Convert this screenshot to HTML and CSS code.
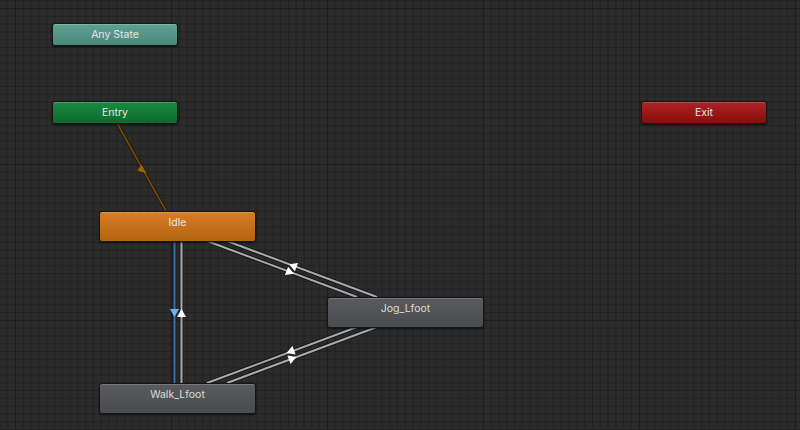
FILE: index.html
```html
<!DOCTYPE html>
<html>
<head>
<meta charset="utf-8">
<link rel="stylesheet" href="styles.css">
</head>
<body>
<div class="graph">
  <svg class="edges" width="800" height="430" viewBox="0 0 800 430">
    <!-- Entry -> Idle -->
    <line x1="117" y1="123" x2="166" y2="211" stroke="#1a1306" stroke-width="3.5"/>
    <line x1="117" y1="123" x2="166" y2="211" stroke="#6a4810" stroke-width="1.8"/>
    <polygon points="137.5,170.5 141.5,164.5 146.5,173.5" fill="#9a660c"/>

    <!-- Idle <-> Walk -->
    <line x1="174.5" y1="241" x2="174.5" y2="383" stroke="#181818" stroke-width="4"/>
    <line x1="174.5" y1="241" x2="174.5" y2="383" stroke="#3e6fa6" stroke-width="2"/>
    <line x1="181.5" y1="241" x2="181.5" y2="383" stroke="#181818" stroke-width="4"/>
    <line x1="181.5" y1="241" x2="181.5" y2="383" stroke="#ababab" stroke-width="2"/>
    <polygon points="170,309 179,309 174.5,317" fill="#6db1f2"/>
    <polygon points="177,317 186,317 181.5,309" fill="#ffffff"/>

    <!-- Idle <-> Jog -->
    <line x1="207" y1="241" x2="357" y2="297" stroke="#161616" stroke-width="4"/>
    <line x1="207" y1="241" x2="357" y2="297" stroke="#ababab" stroke-width="2"/>
    <line x1="227" y1="241" x2="377" y2="297" stroke="#161616" stroke-width="4"/>
    <line x1="227" y1="241" x2="377" y2="297" stroke="#ababab" stroke-width="2"/>
    <!-- Walk <-> Jog -->
    <line x1="207" y1="383" x2="357" y2="327" stroke="#161616" stroke-width="4"/>
    <line x1="207" y1="383" x2="357" y2="327" stroke="#ababab" stroke-width="2"/>
    <line x1="227" y1="383" x2="377" y2="327" stroke="#161616" stroke-width="4"/>
    <line x1="227" y1="383" x2="377" y2="327" stroke="#ababab" stroke-width="2"/>

    <g transform="translate(291.5 269) rotate(-69.5)">
      <polygon points="-8,-4 1,-4 -3.5,4" fill="#ffffff"/>
      <polygon points="-1,4 8,4 3.5,-4" fill="#ffffff"/>
    </g>
    <g transform="translate(291.5 355) rotate(-110.5)">
      <polygon points="-8,-4 1,-4 -3.5,4" fill="#ffffff"/>
      <polygon points="-1,4 8,4 3.5,-4" fill="#ffffff"/>
    </g>
  </svg>

  <div class="node any" style="left:52px;top:23px;">Any State</div>
  <div class="node entry" style="left:52px;top:101px;">Entry</div>
  <div class="node exit" style="left:641px;top:101px;">Exit</div>
  <div class="node state idle" style="left:99px;top:211px;">Idle</div>
  <div class="node state gray" style="left:327px;top:297px;">Jog_Lfoot</div>
  <div class="node state gray" style="left:99px;top:383px;">Walk_Lfoot</div>
</div>
</body>
</html>
```
FILE: styles.css
```css
html, body {
  margin: 0;
  padding: 0;
  background: #2a2a2a;
}
.graph {
  position: relative;
  width: 800px;
  height: 430px;
  overflow: hidden;
  background-color: #2b2b2b;
  background-image:
    linear-gradient(to right, #1d1d1d 1px, transparent 1px),
    linear-gradient(to bottom, #1d1d1d 1px, transparent 1px),
    linear-gradient(to right, #222222 1px, transparent 1px),
    linear-gradient(to bottom, #222222 1px, transparent 1px);
  background-size: 156px 156px, 156px 156px, 7.8px 7.8px, 7.8px 7.8px;
  background-position: 15px 8px, 15px 8px, 15px 8px, 15px 8px;
  font-family: Inter, "Noto Sans", "Liberation Sans", sans-serif;
}
.edges {
  position: absolute;
  left: 0;
  top: 0;
}
.node {
  position: absolute;
  box-sizing: border-box;
  width: 126px;
  height: 23px;
  border-radius: 3px;
  border: 1px solid #161616;
  color: #e6e6e6;
  font-size: 10.5px;
  line-height: 21px;
  text-align: center;
  box-shadow: 0 1px 2px rgba(0,0,0,0.6), inset 0 1px 0 rgba(255,255,255,0.18);
}
.state {
  width: 157px;
  height: 31px;
  line-height: 22px;
}
.any {
  background: linear-gradient(#5fa292, #4a8878);
}
.entry {
  background: linear-gradient(#1a8a42, #0d6a2c);
}
.exit {
  background: linear-gradient(#ab2524, #8a0c0c);
}
.idle {
  background: linear-gradient(#d57d25, #b5640f);
}
.gray {
  color: #dcdcdc;
  background: linear-gradient(#5a5b5e, #4a4b4e);
}
```
